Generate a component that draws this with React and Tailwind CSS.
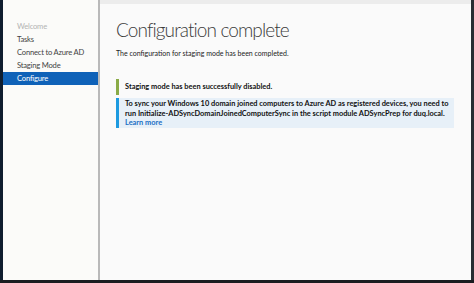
export default function App() {
  const steps = ['Welcome', 'Tasks', 'Connect to Azure AD', 'Staging Mode', 'Configure']
  const current = 'Configure'

  return (
    <div className="flex flex-col w-[474px] h-[283px] overflow-hidden bg-[#1b2330]" style={{ fontFamily: 'Lato, "Open Sans", sans-serif' }}>
      <div className="flex h-[280px]">
        {/* desktop edge */}
        <div className="w-[3px] bg-[#0f1d2e]" />

        {/* step list */}
        <nav className="w-[97px] bg-[#fbfbf9] pt-[20px] border-r-2 border-[#b9b9b9]">
          {steps.map(s => (
            <div
              key={s}
              className={`h-[13px] pl-[14px] text-[7.6px] leading-[13px] tracking-[-0.2px] whitespace-nowrap ${
                s === current ? 'bg-[#0f62b8] text-white' : s === 'Welcome' ? 'text-[#b4b4b4]' : 'text-[#444]'
              }`}
            >
              {s}
            </div>
          ))}
        </nav>

        {/* page */}
        <main className="flex-1 flex flex-col bg-[#fafafa]">
          <div className="h-[4px] bg-[#ececec]" />
          <div className="pl-[16px] pr-[16px]">
            <h1 className="mt-[13px] text-[19px] leading-[26px] font-light tracking-[-0.9px] text-[#3b3b3b] whitespace-nowrap">
              Configuration complete
            </h1>
            <p className="mt-[5px] text-[7px] leading-[10px] text-[#222]">
              The configuration for staging mode has been completed.
            </p>

            <div className="mt-[21px] flex items-center h-[16px] border-l-[3px] border-[#8aab47] pl-[6px]">
              <span className="text-[7.4px] font-bold text-[#111]">Staging mode has been successfully disabled.</span>
            </div>

            <div className="mt-[3px] w-[338px] border-l-[3px] border-[#1d9ae0] bg-[#e7f0f8] pl-[6px] pt-[1px] text-[7.4px] leading-[9.5px] font-bold text-[#111] whitespace-nowrap">
              <p>To sync your Windows 10 domain joined computers to Azure AD as registered devices, you need to</p>
              <p>run Initialize-ADSyncDomainJoinedComputerSync in the script module ADSyncPrep for duq.local.</p>
              <a className="font-bold text-[#1a6ec4]">Learn more</a>
            </div>
          </div>
        </main>

        <div className="w-[3px] bg-[#2a2d33]" />
      </div>
      <div className="h-[3px] bg-[#1a1c20]" />
    </div>
  )
}
